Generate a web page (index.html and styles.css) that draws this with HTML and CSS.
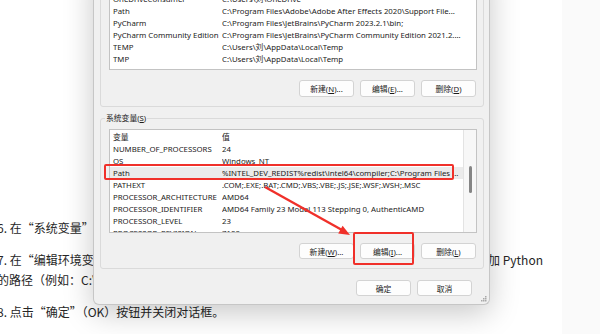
FILE: index.html
```html
<!DOCTYPE html>
<html lang="zh-CN">
<head>
  <meta charset="UTF-8">
  <title>环境变量</title>
  <link rel="stylesheet" href="styles.css">
</head>
<body>
  <div class="page">
    <main class="article">
      <p>6. 在“系统变量”部分找到 Path 变量。</p>
      <p>
        <span class="line split"><span>7. 在“编辑环境变量”窗口中，点击“新建”并添</span><span>加 Python</span></span>
        <span class="line">的路径（例如：C:\Python39）。</span>
      </p>
      <p>8. 点击“确定”（OK）按钮并关闭对话框。</p>
    </main>
    <aside class="side"></aside>
  </div>

  <div class="dialog">
    <fieldset class="group">
      <legend>用户变量(<u>U</u>)</legend>
      <div class="list list-user">
        <div class="row"><span>OneDrive</span><span>C:\Users\刘\OneDrive</span></div>
        <div class="row"><span>OneDriveConsumer</span><span>C:\Users\刘\OneDrive</span></div>
        <div class="row"><span>Path</span><span>C:\Program Files\Adobe\Adobe After Effects 2020\Support File...</span></div>
        <div class="row"><span>PyCharm</span><span>C:\Program Files\JetBrains\PyCharm 2023.2.1\bin;</span></div>
        <div class="row"><span>PyCharm Community Edition</span><span>C:\Program Files\JetBrains\PyCharm Community Edition 2021.2....</span></div>
        <div class="row"><span>TEMP</span><span>C:\Users\刘\AppData\Local\Temp</span></div>
        <div class="row"><span>TMP</span><span>C:\Users\刘\AppData\Local\Temp</span></div>
      </div>
      <div class="buttons">
        <button>新建(<u>N</u>)...</button>
        <button>编辑(<u>E</u>)...</button>
        <button>删除(<u>D</u>)</button>
      </div>
    </fieldset>

    <fieldset class="group group-system">
      <legend>系统变量(<u>S</u>)</legend>
      <div class="list list-system">
        <div class="rows">
          <div class="row"><span>变量</span><span>值</span></div>
          <div class="row"><span>NUMBER_OF_PROCESSORS</span><span>24</span></div>
          <div class="row"><span>OS</span><span>Windows_NT</span></div>
          <div class="row selected"><span>Path</span><span>%INTEL_DEV_REDIST%redist\intel64\compiler;C:\Program Files ...</span></div>
          <div class="row"><span>PATHEXT</span><span>.COM;.EXE;.BAT;.CMD;.VBS;.VBE;.JS;.JSE;.WSF;.WSH;.MSC</span></div>
          <div class="row"><span>PROCESSOR_ARCHITECTURE</span><span>AMD64</span></div>
          <div class="row"><span>PROCESSOR_IDENTIFIER</span><span>AMD64 Family 23 Model 113 Stepping 0, AuthenticAMD</span></div>
          <div class="row"><span>PROCESSOR_LEVEL</span><span>23</span></div>
          <div class="row"><span>PROCESSOR_REVISION</span><span>7100</span></div>
        </div>
        <div class="scrollbar"><div class="thumb"></div></div>
      </div>
      <div class="buttons">
        <button>新建(<u>W</u>)...</button>
        <button>编辑(<u>I</u>)...</button>
        <button>删除(<u>L</u>)</button>
      </div>
    </fieldset>

    <div class="footer">
      <button>确定</button>
      <button>取消</button>
    </div>
    <svg class="grip" width="6" height="6" viewBox="0 0 6 6">
      <rect x="4" y="0" width="1.5" height="1.5" fill="#a8a8a8"/>
      <rect x="2" y="2" width="1.5" height="1.5" fill="#a8a8a8"/>
      <rect x="4" y="2" width="1.5" height="1.5" fill="#a8a8a8"/>
      <rect x="0" y="4" width="1.5" height="1.5" fill="#a8a8a8"/>
      <rect x="2" y="4" width="1.5" height="1.5" fill="#a8a8a8"/>
      <rect x="4" y="4" width="1.5" height="1.5" fill="#a8a8a8"/>
    </svg>
  </div>

  <svg class="marks" width="600" height="334" viewBox="0 0 600 334">
    <rect x="105" y="165" width="348" height="14" rx="1" fill="none" stroke="#f0302a" stroke-width="2"/>
    <rect x="354" y="233" width="59" height="31" rx="1" fill="none" stroke="#f0302a" stroke-width="2"/>
    <line x1="265" y1="187" x2="342" y2="230" stroke="#f0302a" stroke-width="2.4"/>
    <polygon points="350,235 338.2,233.5 342.6,225.7" fill="#f0302a"/>
  </svg>
</body>
</html>
```

FILE: styles.css
```css
body {
  margin: 0;
  width: 600px;
  height: 334px;
  overflow: hidden;
  position: relative;
  font-family: "Noto Sans", "Noto Sans CJK SC", sans-serif;
}

.page {
  display: flex;
  height: 334px;
}

.article {
  width: 565px;
  background: #fff;
  padding-top: 218px;
  box-sizing: border-box;
  font-family: "Noto Sans CJK SC", "Noto Sans", sans-serif;
  font-size: 12px;
  line-height: 20px;
  color: #262626;
  margin-left: -3px;
}

.article p {
  margin: 0 0 12px;
  white-space: nowrap;
}

.line {
  display: block;
}

.line.split {
  display: flex;
  justify-content: space-between;
  padding-right: 19px;
}

.side {
  flex: 1;
  background: #fafafa;
}

/* dialog */

.dialog {
  position: absolute;
  left: 93px;
  bottom: 29px;
  width: 397px;
  box-sizing: border-box;
  padding: 0 5px 8px 6px;
  background: #f0f0f0;
  border: 1px solid #c6c6c6;
  border-top: none;
  border-radius: 0 0 6px 6px;
  box-shadow: 0 8px 30px rgba(0, 0, 0, 0.22);
  font-size: 7.8px;
  color: #1b1b1b;
}

.group {
  margin: 0;
  padding: 5px 6px 9px 8px;
  border: 1px solid #dadada;
  border-radius: 3px;
}

.group + .group {
  margin-top: 6px;
}

.group legend {
  padding: 0 1px;
  margin-left: -4px;
  line-height: 11px;
}

.list {
  background: #fff;
  border: 1px solid #c3c3c3;
  overflow: hidden;
}

.list-user {
  height: 90px;
  box-sizing: border-box;
  display: flex;
  flex-direction: column;
  justify-content: flex-end;
  padding: 0 0 4px 3px;
}

.list-system {
  height: 104px;
  box-sizing: border-box;
  display: flex;
  padding-top: 1px;
}

.rows {
  flex: 1;
  padding-left: 3px;
  overflow: hidden;
}

.row {
  display: grid;
  grid-template-columns: 109px 1fr;
  height: 12px;
  line-height: 12px;
  white-space: nowrap;
}

.row span {
  overflow: hidden;
}

.row.selected {
  background: #ebebeb;
  margin-left: -3px;
  padding-left: 3px;
}

.scrollbar {
  width: 12px;
  border-left: 1px solid #e3e3e3;
  background: #f7f7f7;
  margin-top: -1px;
  padding-top: 36px;
}

.thumb {
  width: 3px;
  height: 27px;
  margin: 0 auto;
  background: #858585;
  border-radius: 2px;
}

.buttons {
  display: flex;
  justify-content: flex-end;
  gap: 6px;
  margin-top: 10px;
  padding-right: 1px;
}

button {
  width: 55px;
  height: 17px;
  padding: 0;
  font: inherit;
  color: #1b1b1b;
  background: #fdfdfd;
  border: 1px solid #d3d3d3;
  border-radius: 3px;
}

.group-system .buttons button {
  height: 16px;
}

.footer {
  display: flex;
  justify-content: flex-end;
  gap: 6px;
  margin-top: 11px;
  padding-right: 12px;
}

.footer button {
  height: 16px;
}

.grip {
  position: absolute;
  right: 2px;
  bottom: 2px;
}

.marks {
  position: absolute;
  left: 0;
  top: 0;
  pointer-events: none;
}
```
